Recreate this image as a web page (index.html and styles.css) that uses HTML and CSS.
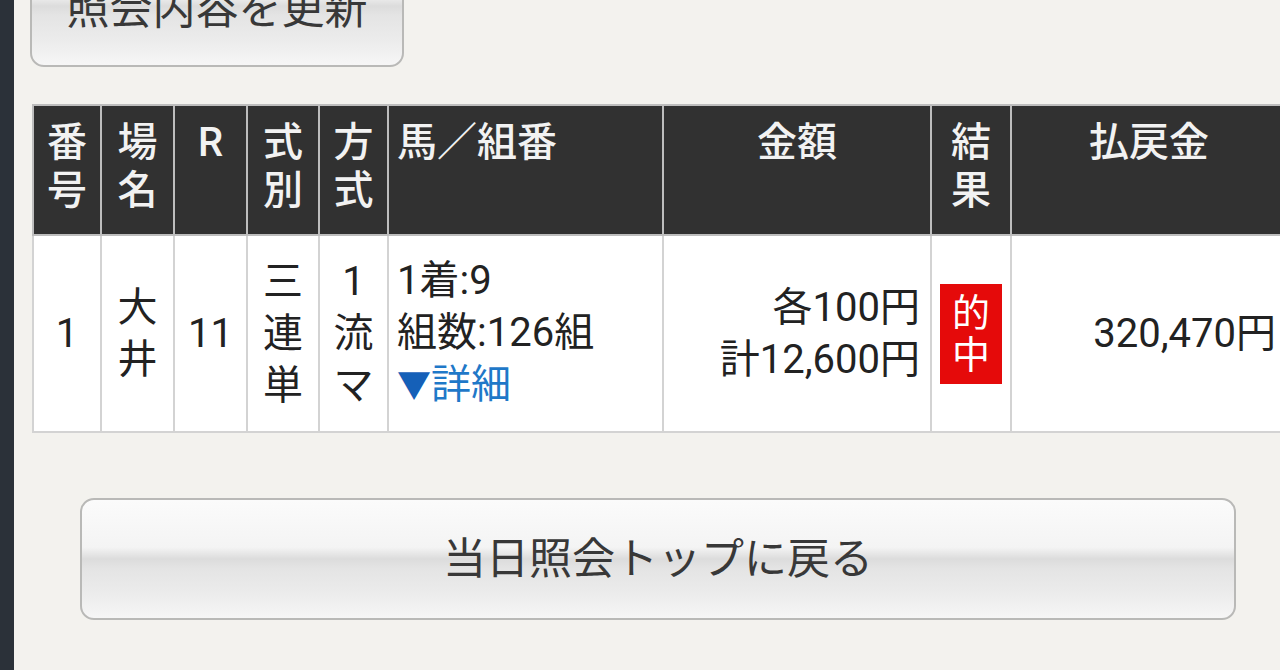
FILE: index.html
```html
<!DOCTYPE html>
<html lang="ja">
<head>
<meta charset="utf-8">
<link rel="stylesheet" href="styles.css">
</head>
<body>
<div class="app">
  <div class="rail"></div>
  <div class="main">
    <div class="btn btn-top">照会内容を更新</div>
    <table class="result">
      <colgroup>
        <col class="c1"><col class="c2"><col class="c3"><col class="c4"><col class="c5">
        <col class="c6"><col class="c7"><col class="c8"><col class="c9">
      </colgroup>
      <thead>
        <tr>
          <th class="center">番<br>号</th>
          <th class="center">場<br>名</th>
          <th class="center">R</th>
          <th class="center">式<br>別</th>
          <th class="center">方<br>式</th>
          <th class="left">馬／組番</th>
          <th class="center">金額</th>
          <th class="center">結<br>果</th>
          <th class="center">払戻金</th>
        </tr>
      </thead>
      <tbody>
        <tr>
          <td class="center">1</td>
          <td class="center">大<br>井</td>
          <td class="center">11</td>
          <td class="center">三<br>連<br>単</td>
          <td class="center">1<br>流<br>マ</td>
          <td class="left">1着:9<br>組数:126組<br><span class="detail"><span class="tri">▼</span>詳細</span></td>
          <td class="right">各100円<br>計12,600円</td>
          <td class="center"><span class="hit"><span class="hit-ch">的</span><span class="hit-ch">中</span></span></td>
          <td class="right">320,470円</td>
        </tr>
      </tbody>
    </table>
    <div class="btn btn-back">当日照会トップに戻る</div>
  </div>
</div>
</body>
</html>
```
FILE: styles.css
```css
html, body {
  margin: 0;
  padding: 0;
}
body {
  background: #f3f2ee;
  overflow: hidden;
  width: 1280px;
  height: 670px;
  font-family: Roboto, "Noto Sans CJK JP", sans-serif;
  color: #222;
}
.app {
  display: flex;
  height: 670px;
}
.rail {
  width: 14px;
  flex: none;
  background: #2b3139;
}
.main {
  flex: 1;
  padding-left: 16px;
  min-width: 0;
}
.btn {
  box-sizing: border-box;
  display: flex;
  align-items: center;
  justify-content: center;
  border: 2px solid #b9b9b7;
  border-radius: 14px;
  color: #383838;
  font-size: 43px;
  background: linear-gradient(to bottom, #fbfbfb 0%, #f4f4f4 40%, #dcdcdc 50%, #e4e4e4 58%, #ececec 80%, #f6f6f6 100%);
}
.btn-top {
  margin-top: -55px;
  width: 374px;
  height: 122px;
  padding-bottom: 2px;
}
.btn-back {
  margin-top: 65px;
  margin-left: 50px;
  width: 1156px;
  height: 122px;
  padding-bottom: 8px;
}
.result {
  margin-top: 37px;
  margin-left: 2px;
  border-collapse: collapse;
  table-layout: fixed;
  width: 1254px;
  font-size: 40px;
}
.c1 { width: 68px; }
.c2 { width: 73px; }
.c3 { width: 73px; }
.c4 { width: 72px; }
.c5 { width: 69px; }
.c6 { width: 275px; }
.c7 { width: 268px; }
.c8 { width: 80px; }
.c9 { width: 276px; }
.result th {
  background: #313131;
  color: #f2f2f2;
  font-weight: 500;
  line-height: 48px;
  vertical-align: top;
  padding: 13px 0 19px;
  border: 2px solid #bdbdbd;
  white-space: nowrap;
}
.result td {
  background: #fff;
  line-height: 52px;
  vertical-align: middle;
  height: 195px;
  padding: 0;
  border: 2px solid #d3d3d3;
  white-space: nowrap;
}
.center { text-align: center; }
.left { text-align: left; }
.result th.left, .result td.left { padding-left: 8px; }
.right { text-align: right; }
.result td.right { padding-right: 10px; }
.detail {
  color: #1f78c8;
}
.tri {
  color: #1560b8;
  font-size: 34px;
}
.hit {
  display: inline-flex;
  flex-direction: column;
  align-items: center;
  background: #e50a0a;
  color: #fff;
  font-size: 38px;
  padding: 8px 12px;
  vertical-align: middle;
}
.hit-ch {
  display: block;
  height: 42px;
  line-height: 42px;
}
```
